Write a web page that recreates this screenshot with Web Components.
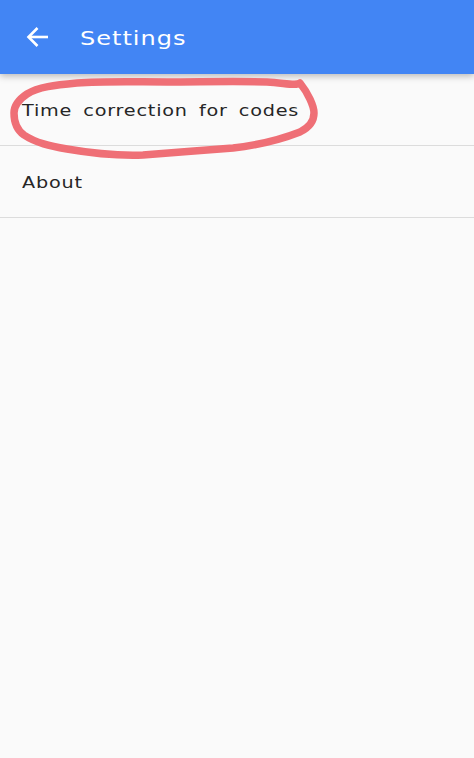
<!DOCTYPE html>
<html>
<head>
<meta charset="utf-8">
<style>
html,body{margin:0;padding:0;height:100%;background:#fafafa;overflow:hidden}
</style>
</head>
<body>
<settings-screen>
  <app-bar title="Settings"></app-bar>
  <settings-item>Time correction for codes</settings-item>
  <settings-item>About</settings-item>
  <scribble-mark></scribble-mark>
</settings-screen>
<script>
class SettingsScreen extends HTMLElement{
  constructor(){
    super();
    this.attachShadow({mode:'open'}).innerHTML=`<style>
:host{display:flex;flex-direction:column;position:relative;width:474px;height:758px;background:#fafafa;overflow:hidden;font-family:"DejaVu Sans",sans-serif}
</style><slot></slot>`;
  }
}
class AppBar extends HTMLElement{
  constructor(){
    super();
    this.attachShadow({mode:'open'}).innerHTML=`<style>
:host{display:flex;align-items:center;height:74px;flex:none;background:#4285f4;box-shadow:0 2px 7px rgba(0,0,0,.28);position:relative;z-index:1;color:#fff}
svg{margin-left:26px;width:23px;height:22px;flex:none}
span{margin-left:31px;margin-top:2px;font-size:20px;letter-spacing:.83px;display:inline-block;transform:scaleX(1.2);transform-origin:left center}
</style>
<svg viewBox="0 0 23 22" fill="none" stroke="#fff" stroke-width="2.6"><path d="M22 11H3"/><path d="M11.5 2 2.5 11l9 9"/></svg>
<span></span>`;
    this.shadowRoot.querySelector('span').textContent=this.getAttribute('title');
  }
}
class SettingsItem extends HTMLElement{
  constructor(){
    super();
    this.attachShadow({mode:'open'}).innerHTML=`<style>
:host{display:flex;align-items:center;height:69px;padding-top:2px;flex:none;padding-left:22px;border-bottom:1px solid #dcdcdc;font-size:16px;letter-spacing:.67px;word-spacing:3.5px;color:#262626}
span{display:inline-block;transform:scaleX(1.2);transform-origin:left center}
</style><span><slot></slot></span>`;
  }
}
class ScribbleMark extends HTMLElement{
  constructor(){
    super();
    this.attachShadow({mode:'open'}).innerHTML=`<style>
:host{position:absolute;left:0;top:0;width:474px;height:200px;pointer-events:none;z-index:2}
svg{display:block}
</style>
<svg width="474" height="200" fill="none" stroke="#ef6f76" stroke-width="7.5" stroke-linecap="round" stroke-linejoin="round">
<path d="M300 83C296 86 285 83 267 82C235 81 200 82 167 82C135 82 105 81 77 83C55 85 38 87 27 94C18 100 14 106 14 113C14 122 17 130 24 135C36 143 50 146 67 149C90 153 115 156 143 155C170 153 205 150 233 148C260 145 282 139 300 132C308 128 314 122 314 113C314 106 308 93 300 83Z"/>
</svg>`;
  }
}
customElements.define('settings-screen',SettingsScreen);
customElements.define('app-bar',AppBar);
customElements.define('settings-item',SettingsItem);
customElements.define('scribble-mark',ScribbleMark);
</script>
</body>
</html>
